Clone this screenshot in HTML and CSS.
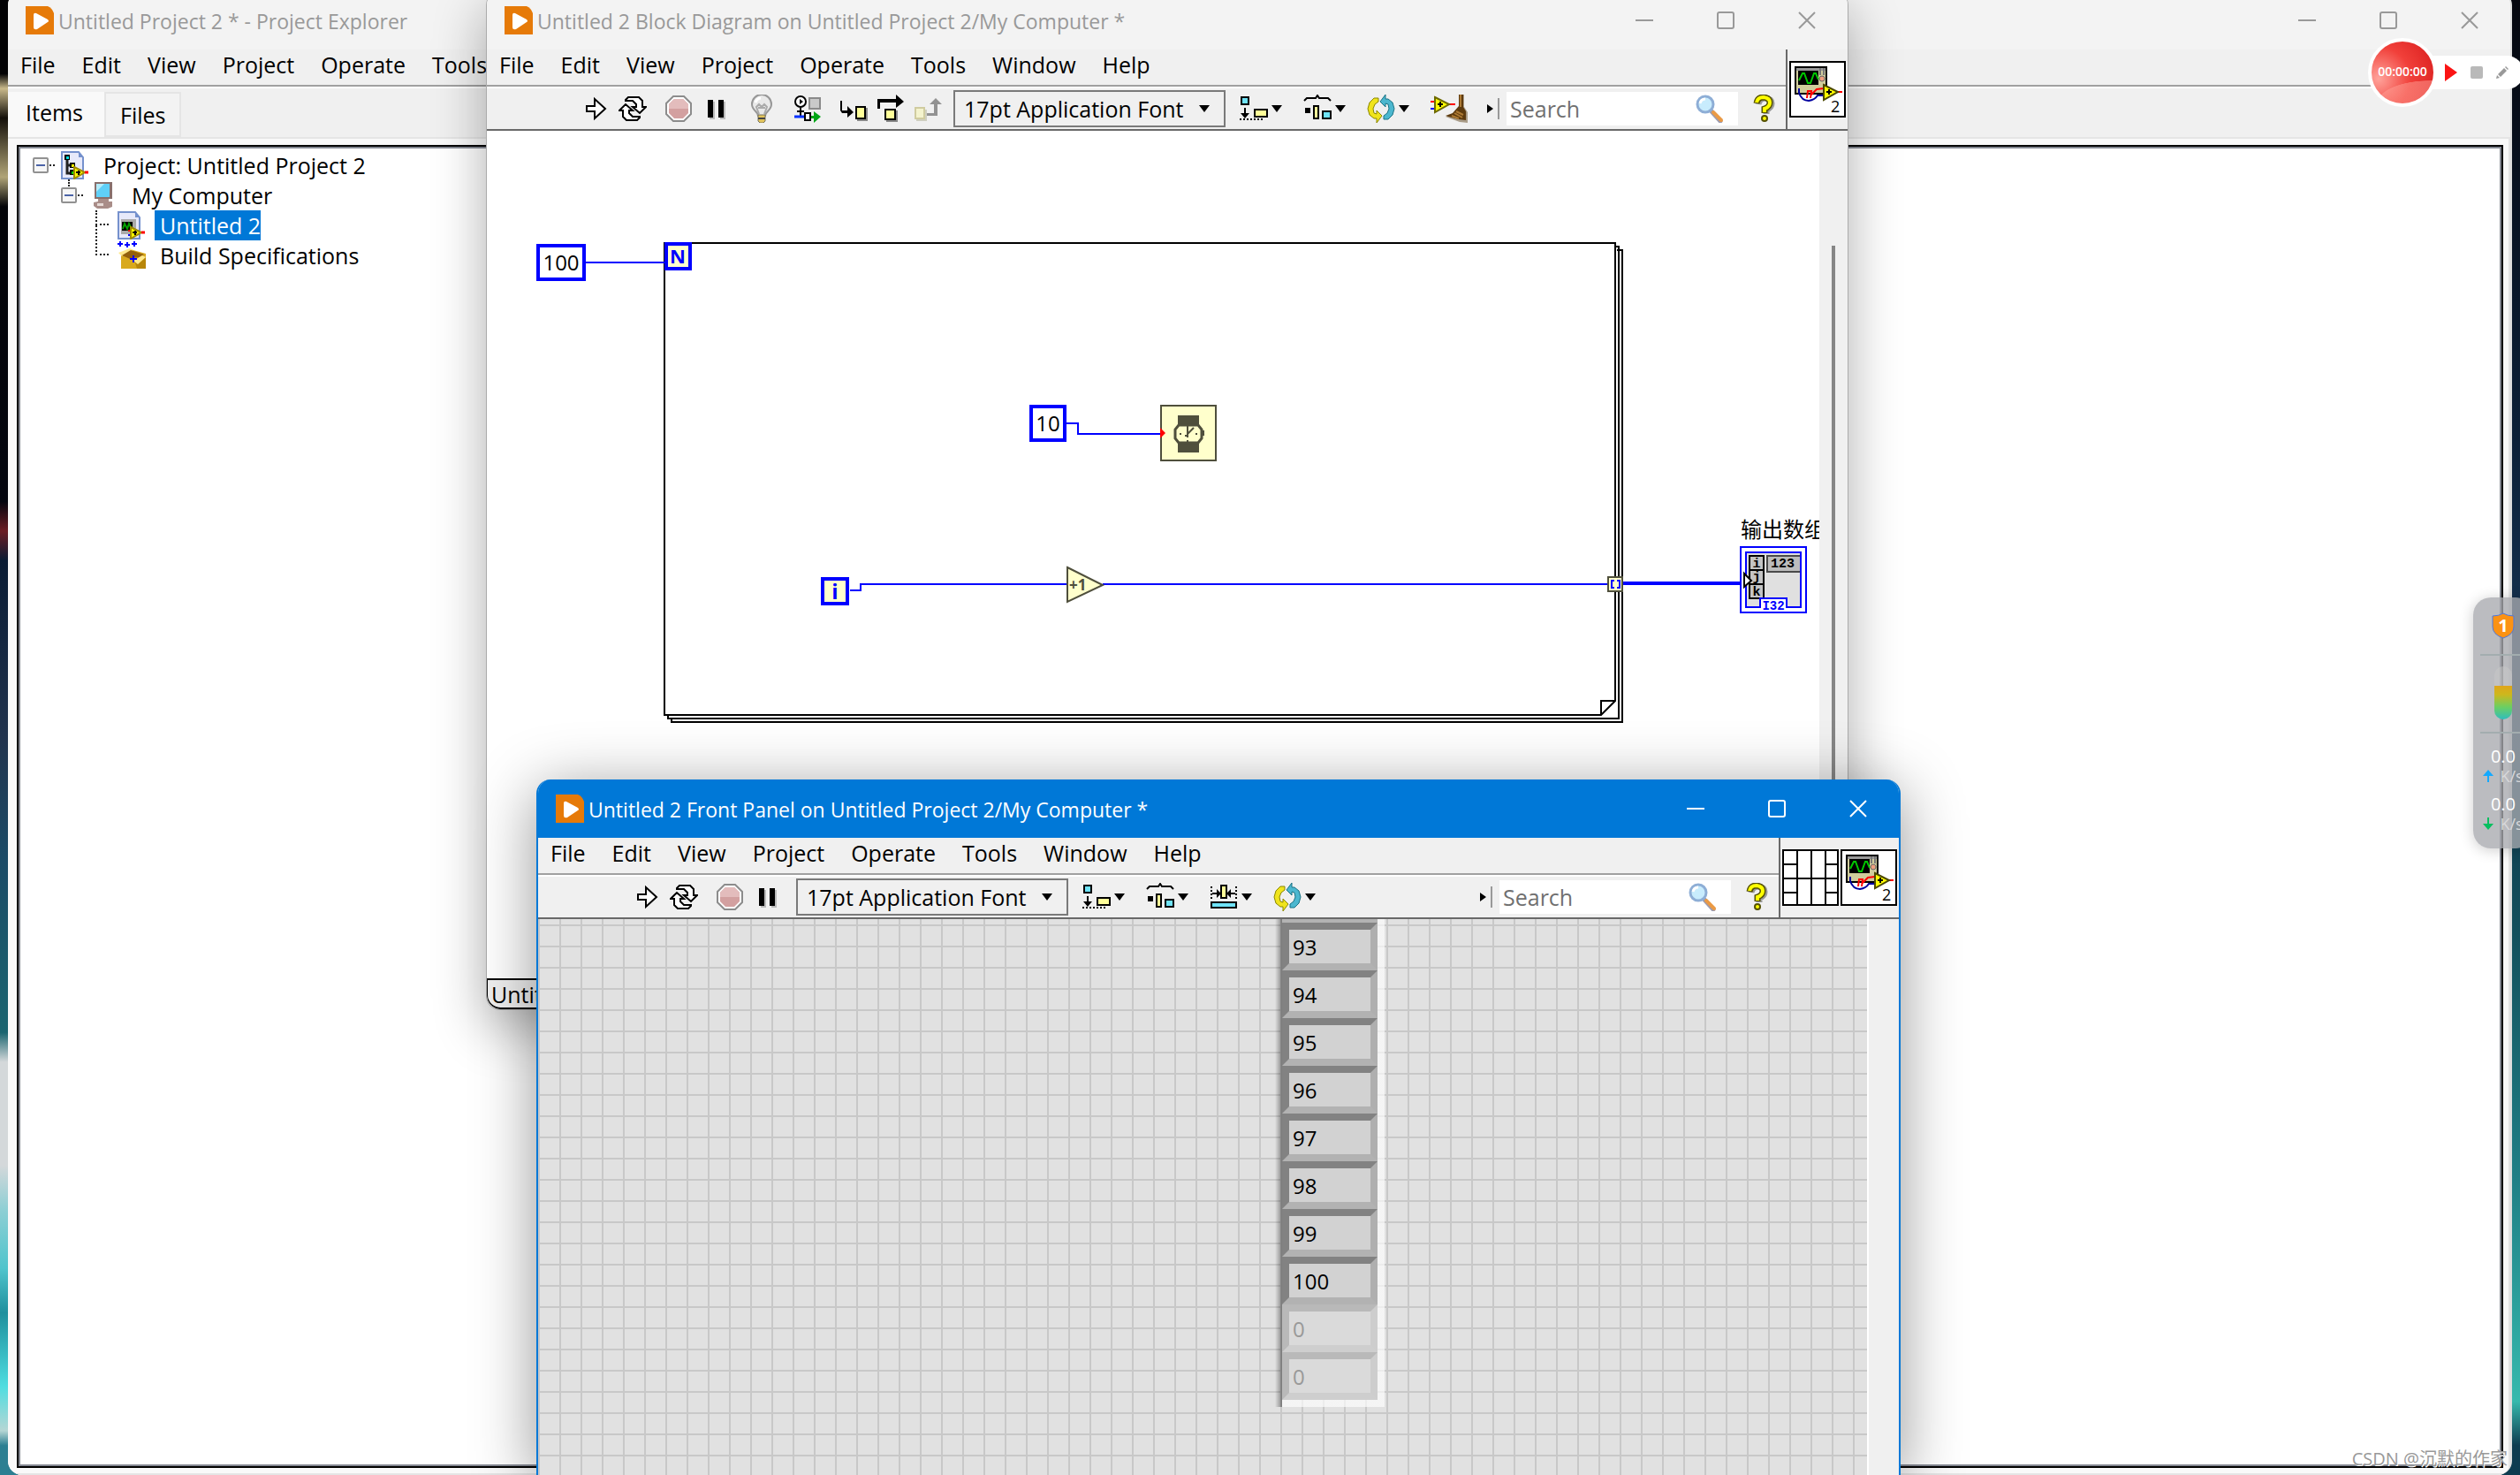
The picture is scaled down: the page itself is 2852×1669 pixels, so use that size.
FILE: index.html
```html
<!DOCTYPE html>
<html lang="en">
<head>
<meta charset="utf-8">
<title>Untitled 2 Front Panel on Untitled Project 2/My Computer *</title>
<link rel="stylesheet" href="styles.css">
</head>
<body>
<svg class="sprite" aria-hidden="true">
  <symbol id="app" viewBox="0 0 32 32"><path fill="#e67a08" d="M0 0h25q5 2 7 8v24H0z"/><path fill="#fff" d="M9 10q0-3 3-2l13 7q2 2 0 3l-12 8q-4 1-4-2z"/></symbol>
  <symbol id="min" viewBox="0 0 20 20"><path d="M0 10h20" stroke="currentColor" stroke-width="2"/></symbol>
  <symbol id="max" viewBox="0 0 20 20"><rect x="1" y="1" width="18" height="18" rx="2" fill="none" stroke="currentColor" stroke-width="2"/></symbol>
  <symbol id="close" viewBox="0 0 20 20"><path d="M1 1l18 18M19 1L1 19" stroke="currentColor" stroke-width="2"/></symbol>
  <symbol id="run" viewBox="0 0 32 32"><path d="M6 13h9V5l12 11-12 11v-8H6z" fill="#fff" stroke="#000" stroke-width="2"/></symbol>
  <symbol id="loop" viewBox="0 0 32 32"><g fill="#fff" stroke="#000" stroke-width="2"><path d="M8 6l3-3h12l4 4v7h4l-7 7-8-7h4v-3l-4-4H8z"/><path d="M24 26l-3 3H9l-4-4v-7H1l7-7 8 7h-4v3l4 4h8z"/></g></symbol>
  <symbol id="stop" viewBox="0 0 32 32"><path d="M10 2h12l8 8v12l-8 8H10l-8-8V10z" fill="#fff" stroke="#8c8c8c" stroke-width="2"/><path d="M11 5h10l6 6v10l-6 6H11l-6-6V11z" fill="#d3a0a0"/><path d="M11 5h10l6 6v5H5v-5z" fill="#e3bcbc"/></symbol>
  <symbol id="pause" viewBox="0 0 32 32"><path d="M9 8h6v20H9zM21 8h6v20h-6z" fill="#bbb"/><path d="M7 6h6v20H7zM19 6h6v20h-6z"/></symbol>
  <symbol id="bulb" viewBox="0 0 32 32"><path d="M12 24c0-5-7-6-7-13a11 11 0 0122 0c0 7-7 8-7 13z" fill="#e9e9e9" stroke="#979797" stroke-width="2"/><path d="M13 22l-3-8 3-3 3 3 3-3 3 3-3 8M12 15h8" fill="none" stroke="#aaa" stroke-width="2"/><path d="M9 9q2-5 6-5" stroke="#fff" stroke-width="3" fill="none"/><path d="M12 23h8v7l-2 2h-4l-2-2z" fill="#e2c45b" stroke="#77735f"/><path d="M12 27h8" stroke="#444" stroke-width="2"/></symbol>
  <symbol id="retain" viewBox="0 0 32 32"><circle cx="8" cy="8" r="6" fill="#fff" stroke="#000" stroke-width="2"/><path d="M7 5l4 3-4 3zM7 14h2v11H7zM4 18h8v2H4z"/><rect x="18" y="4" width="12" height="12" fill="#c9c9c9" stroke="#8a8a8a" stroke-width="2"/><path d="M1 25h13" stroke="#0030ff" stroke-width="3"/><rect x="13" y="21" width="6" height="8" fill="#fff" stroke="#000" stroke-width="2"/><path d="M20 24h3v-5l8 6-8 7v-5h-3z" fill="#00a515"/></symbol>
  <symbol id="into" viewBox="0 0 32 32"><path d="M1 7h2v11h6v-5l7 7-7 6v-5H3l-2-3z"/><path d="M20 15h12v15H20z" fill="#888"/><rect x="19" y="14" width="10" height="13" fill="#ffff99" stroke="#000" stroke-width="2"/></symbol>
  <symbol id="over" viewBox="0 0 32 32"><path d="M1 5h21V0l9 8-9 7V9H4v7H1z"/><rect x="10" y="17" width="11" height="11" fill="#ffff99" stroke="#000" stroke-width="2"/><path d="M23 18v12H11" stroke="#888" stroke-width="2" fill="none"/></symbol>
  <symbol id="out" viewBox="0 0 32 32"><rect x="2" y="15" width="10" height="12" fill="#f4f3cd" stroke="#d0cca0" stroke-width="2"/><path d="M14 17v12H3" stroke="#cfcfc0" stroke-width="2" fill="none"/><path d="M15 21h8V11h-5l7-7 7 7h-5v13H15z" fill="#929292"/></symbol>
  <symbol id="align" viewBox="0 0 32 32"><rect x="2" y="3" width="8" height="8" fill="#6fe3f7" stroke="#000" stroke-width="2"/><path d="M5 15h2v6h4l-5 6-5-6h4z"/><rect x="17" y="17" width="14" height="8" fill="#ffff99" stroke="#000" stroke-width="2"/><path d="M0 28h28" stroke="#000" stroke-width="2" stroke-dasharray="2 2"/></symbol>
  <symbol id="dist" viewBox="0 0 32 32"><path d="M1 7l3-3h10l2-3 2 3h10l3 3" fill="none" stroke="#000" stroke-width="2"/><path d="M2 15h6v6H2z"/><rect x="12" y="13" width="5" height="14" fill="#ffff99" stroke="#000" stroke-width="2"/><rect x="22" y="19" width="9" height="8" fill="#6fe3f7" stroke="#000" stroke-width="2"/></symbol>
  <symbol id="resize" viewBox="0 0 32 32"><path d="M2 4v14M30 4v14" stroke="#000" stroke-width="2" stroke-dasharray="2 2"/><path d="M3 12h8M29 12h-8" stroke="#000" stroke-width="2"/><path d="M8 7l5 5-5 5zM24 7l-5 5 5 5z"/><rect x="13" y="3" width="6" height="14" fill="#ffff99" stroke="#000" stroke-width="2"/><rect x="2" y="22" width="28" height="6" fill="#6fe3f7" stroke="#000" stroke-width="2"/></symbol>
  <symbol id="sync" viewBox="0 0 32 32"><path d="M13 4H8L3 9 1 16l2 7 5 4h3v5l6-8-6-6v4l-3-1-1-5 2-5 4-3z" fill="#f0e41c" stroke="#8a8700" stroke-width="1"/><path d="M19 28h5l5-5 2-7-2-7-5-4h-3V0l-6 8 6 6v-4l3 1 1 5-2 5-4 3z" fill="#4cb7cf" stroke="#1a7385" stroke-width="1"/></symbol>
  <symbol id="clean" viewBox="0 0 42 32"><path d="M0 8h5M20 11h8" stroke="#f00" stroke-width="2"/><path d="M0 16h5" stroke="#00f" stroke-width="2"/><path d="M5 3l16 8L5 20z" fill="#ff0" stroke="#6e6a00" stroke-width="2"/><path d="M8 11h6M11 8v6" stroke="#000" stroke-width="2"/><path d="M34 0h4v14l4 6v12l-9-1-16-6 8-3 7-8z" fill="#a99c88"/><path d="M32 0h5v14l3 5v10l-8-1-15-4 8-3 7-8z" fill="#5d3a0e"/><path d="M34 0v14M24 24l8 3M29 19l8 4M27 21l9 5" stroke="#ad7a34" stroke-width="2"/></symbol>
  <symbol id="mag" viewBox="0 0 32 32"><path d="M18 19l10 11" stroke="#9b9bb0" stroke-width="5" stroke-linecap="round"/><path d="M20 20l9 9" stroke="#ea9a45" stroke-width="4" stroke-linecap="round"/><circle cx="11" cy="11" r="9" fill="#c8ecfd" stroke="#8eaed6" stroke-width="3"/><path d="M5 10q1-5 6-5" stroke="#fff" stroke-width="3" fill="none"/></symbol>
  <symbol id="help" viewBox="0 0 32 32"><path d="M10 11q1-7 8-7 7 1 7 6t-6 7v5" fill="none" stroke="#9a9a9a" stroke-width="7"/><path d="M8 10q1-7 8-7 7 1 7 6t-6 7v5" fill="none" stroke="#555100" stroke-width="7"/><path d="M8 9q1-6 8-6 7 1 7 6t-6 7v4" fill="none" stroke="#ff0" stroke-width="4"/><circle cx="17" cy="27" r="3" fill="#ff0" stroke="#555100" stroke-width="2"/></symbol>
  <symbol id="down" viewBox="0 0 12 10"><path d="M0 1h12L6 9z"/></symbol>
  <symbol id="grip" viewBox="0 0 14 32"><path d="M0 11l7 5-7 5z"/><path d="M13 4v24" stroke="#999" stroke-width="2"/></symbol>
  <symbol id="vi" viewBox="0 0 64 64"><rect x="1" y="1" width="62" height="62" fill="#fff" stroke="#000" stroke-width="2"/><rect x="7" y="7" width="35" height="30" fill="#d0cc9c" stroke="#000" stroke-width="2"/><path d="M8 8h33v3H8z" fill="#999"/><path d="M10 11h23v16H10z"/><path d="M11 22l4-8h2l4 11h3l4-11h2l3 7" fill="none" stroke="#00c800" stroke-width="2"/><path d="M35 8v8M39 8v8" stroke="#777" stroke-width="2"/><circle cx="37" cy="20" r="3" fill="#f0a080" stroke="#666"/><path d="M11 31v5q3 9 11 9 7-1 10-6h7" fill="none" stroke="#0000a0" stroke-width="2"/><path d="M20 42l1-8h4l-1 8M25 38l6-6 8-1M52 35h8" fill="none" stroke="#f00" stroke-width="2"/><path d="M39 27l16 8-16 9z" fill="#ff0" stroke="#4b4800" stroke-width="2"/><path d="M42 35h6M45 32v6" stroke="#000" stroke-width="2"/><text x="47" y="58" font-size="18" class="svg-label">2</text></symbol>
  <symbol id="conn" viewBox="0 0 64 64"><g fill="#fff" stroke="#000" stroke-width="2"><path d="M1 1h62v62H1z"/><path d="M17 1v62M33 1v62M49 1v62M1 33h62M1 17h16M1 49h16M49 17h14M49 49h14"/></g></symbol>
  <symbol id="page" viewBox="0 0 32 32"><path d="M1 1h19l5 6v24H1z" fill="#e7e9fa" stroke="#7591cd" stroke-width="2"/><path d="M20 1v6h5z" fill="#7591cd"/></symbol>
  <symbol id="arrowtag" viewBox="0 0 32 32"><path d="M15 18l12 6-12 7z" fill="#ff0" stroke="#a18c00" stroke-width="2"/><path d="M17 24h5M20 22v5" stroke="#000" stroke-width="2"/><path d="M27 24h4" stroke="#f00" stroke-width="3"/></symbol>
  <symbol id="proj" viewBox="0 0 32 32"><use href="#page"/><path d="M7 9v16h5M8 16h5" fill="none" stroke="#222" stroke-width="3"/><path d="M4 4h6v6H4zM10 13h6v6h-6zM10 21h6v6h-6z"/><path d="M6 6h3v3H6z" fill="#0dd"/><path d="M12 15h3v3h-3z" fill="#ff0"/><path d="M12 23h3v3h-3z" fill="#0c0"/><use href="#arrowtag"/></symbol>
  <symbol id="vifile" viewBox="0 0 32 32"><use href="#page"/><path d="M4 9h17v17H4z" fill="#aaa"/><path d="M5 12h12v10H5z"/><path d="M6 20l2-6 3 6 2-6 3 6" fill="none" stroke="#00a000" stroke-width="2"/><path d="M12 22h4" stroke="#f00" stroke-width="2"/><path d="M12 27h4" stroke="#00f" stroke-width="2"/><use href="#arrowtag"/></symbol>
  <symbol id="pc" viewBox="0 0 32 32"><path d="M6 1h20v19H6z" fill="#88706d"/><path d="M8 3h15v15H8z" fill="#5fd0f8"/><path d="M8 3h9L8 12z" fill="#b4ecfb"/><path d="M10 20h12v3h4v6l-5 2H9l-4-3v-4l5-1z" fill="#a98d88"/><path d="M9 25h7v3H9z" fill="#e6dad6"/></symbol>
  <symbol id="build" viewBox="0 0 32 32"><path d="M4 13l10-4 18 5v17H4z" fill="#d9a91c"/><path d="M1 13l13-5 4 2L5 17z" fill="#ffe98c"/><path d="M5 16l10-6 15 5-11 7z" fill="#94610b"/><path d="M18 18h14v13H22z" fill="#b88608"/><path d="M18 22l10-6 4 2-9 8z" fill="#ffe98c"/><path d="M0 3h6M3 0v6M8 4h6M11 1v6M16 3h6M19 0v6M14 20h8M18 16v8" stroke="#00f" stroke-width="2"/></symbol>
</svg>

<main class="desktop">
  <section class="window explorer" aria-label="Project Explorer">
    <header class="titlebar">
      <svg class="ico"><use href="#app"/></svg><h1>Untitled Project 2 * - Project Explorer</h1>
      <button aria-label="Minimize"><svg><use href="#min"/></svg></button><button aria-label="Maximize"><svg><use href="#max"/></svg></button><button aria-label="Close"><svg><use href="#close"/></svg></button>
    </header>
    <nav class="menu"><button>File</button><button>Edit</button><button>View</button><button>Project</button><button>Operate</button><button>Tools</button></nav>
    <div class="tabs"><button class="tab active">Items</button><button class="tab">Files</button></div>
    <div class="tab-page">
      <ul class="tree">
        <li class="node level-0"><button class="twist" aria-label="Collapse"></button><svg class="ico"><use href="#proj"/></svg><span>Project: Untitled Project 2</span></li>
        <li class="node level-1"><button class="twist" aria-label="Collapse"></button><svg class="ico"><use href="#pc"/></svg><span>My Computer</span></li>
        <li class="node level-2"><i class="branch"></i><svg class="ico"><use href="#vifile"/></svg><span class="selected">Untitled 2</span></li>
        <li class="node level-2"><i class="branch last"></i><svg class="ico"><use href="#build"/></svg><span>Build Specifications</span></li>
      </ul>
    </div>
  </section>

  <section class="window diagram" aria-label="Block Diagram">
    <header class="titlebar">
      <svg class="ico"><use href="#app"/></svg><h2>Untitled 2 Block Diagram on Untitled Project 2/My Computer *</h2>
      <button aria-label="Minimize"><svg><use href="#min"/></svg></button><button aria-label="Maximize"><svg><use href="#max"/></svg></button><button aria-label="Close"><svg><use href="#close"/></svg></button>
    </header>
    <div class="chrome">
      <div class="bars">
        <nav class="menu"><button>File</button><button>Edit</button><button>View</button><button>Project</button><button>Operate</button><button>Tools</button><button>Window</button><button>Help</button></nav>
        <div class="toolbar">
          <div class="group"><button class="tool" aria-label="Run"><svg class="ico"><use href="#run"/></svg></button><button class="tool" aria-label="Run Continuously"><svg class="ico"><use href="#loop"/></svg></button></div>
          <div class="group"><button class="tool" aria-label="Abort"><svg class="ico"><use href="#stop"/></svg></button><button class="tool" aria-label="Pause"><svg class="ico"><use href="#pause"/></svg></button></div>
          <button class="tool" aria-label="Highlight Execution"><svg class="ico"><use href="#bulb"/></svg></button>
          <button class="tool" aria-label="Retain Wire Values"><svg class="ico"><use href="#retain"/></svg></button>
          <div class="group"><button class="tool" aria-label="Step Into"><svg class="ico"><use href="#into"/></svg></button><button class="tool" aria-label="Step Over"><svg class="ico"><use href="#over"/></svg></button><button class="tool" aria-label="Step Out"><svg class="ico"><use href="#out"/></svg></button></div>
          <div class="font-pick"><select aria-label="Text Settings"><option>17pt Application Font</option></select><svg class="arrow"><use href="#down"/></svg></div>
          <div class="drops">
            <button class="drop" aria-label="Align Objects"><svg class="ico"><use href="#align"/></svg><svg class="arrow"><use href="#down"/></svg></button>
            <button class="drop" aria-label="Distribute Objects"><svg class="ico"><use href="#dist"/></svg><svg class="arrow"><use href="#down"/></svg></button>
            <button class="drop" aria-label="Reorder"><svg class="ico"><use href="#sync"/></svg><svg class="arrow"><use href="#down"/></svg></button>
            <button class="tool wide" aria-label="Clean Up Diagram"><svg><use href="#clean"/></svg></button>
          </div>
          <svg class="grip"><use href="#grip"/></svg>
          <div class="search"><input type="search" placeholder="Search" aria-label="Search diagram"><svg class="ico"><use href="#mag"/></svg></div>
          <button class="tool" aria-label="Context Help"><svg class="ico"><use href="#help"/></svg></button>
        </div>
      </div>
      <div class="panes"><svg><use href="#vi"/></svg></div>
    </div>
    <div class="workspace">
      <div class="canvas">
        <svg width="1508" height="960" viewBox="551 148 1508 960" role="img" aria-label="For loop diagram">
          <g fill="none" stroke="#000" stroke-width="2">
            <path d="M760 813v4h1076V283h-6M756 809v4h1076V279h-4"/>
            <path d="M752 275h1076v518l-16 16H752z" fill="#fff"/>
            <path d="M1812 809v-16h16"/>
          </g>
          <g fill="none" stroke="#00f" stroke-width="2">
            <path d="M663 297h90M1207 479h13v12h94M962 668h12v-7h235M1248 661h572"/>
            <path d="M1837 660h134" stroke-width="4"/>
          </g>
          <g stroke="#00f" stroke-width="4" fill="#fff">
            <path d="M609 278h52v38h-52zM1167 460h38v38h-38z"/>
            <path d="M754 276h27v28h-27zM931 655h28v28h-28z" fill="#ffc"/>
          </g>
          <g class="svg-label"><text x="635" y="306" font-size="24" text-anchor="middle">100</text><text x="1186" y="488" font-size="24" text-anchor="middle">10</text></g>
          <g class="svg-bold" fill="#00f"><text x="767" y="298" font-size="22" text-anchor="middle">N</text><text x="945" y="678" font-size="24" text-anchor="middle">i</text></g>
          <path d="M1314 459h62v62h-62z" fill="#ffc" stroke="#4f4f3c" stroke-width="2"/>
          <path d="M1313 484l6 6-6 6z" fill="#f00"/>
          <path d="M1333 470h24v10h-24zM1333 502h24v10h-24zM1361 487h2v6h-2z" fill="#4f4f3c"/>
          <path d="M1334 481h22l4 5v10l-4 5h-22l-4-5v-10z" fill="#ffc" stroke="#4f4f3c" stroke-width="3"/>
          <path d="M1344 482v13M1344 491l7-7M1335 491h2M1353 491h2M1343 499h2M1341 493h3" stroke="#4f4f3c" stroke-width="2"/>
          <path d="M1208 642l40 20-40 19z" fill="#ffc" stroke="#4f4f3c" stroke-width="2"/>
          <text x="1210" y="668" font-size="17" class="svg-bold" fill="#4f4f3c">+1</text>
          <path d="M1820 653h16v16h-16z" fill="#ffc" stroke="#4f4f3c" stroke-width="2"/>
          <path d="M1827 657h-3v8h3M1830 657h3v8h-3" fill="none" stroke="#00f" stroke-width="2"/>
          <text x="1970" y="608" font-size="24" class="svg-label">输出数组</text>
          <path d="M1970 619h74v74h-74z" fill="#fff" stroke="#00f" stroke-width="2"/>
          <path d="M1976 625h62v62h-62z" fill="#e0e0e0" stroke="#00f" stroke-width="2"/>
          <path d="M1980 629h16v48h-16zM1980 645h16M1980 661h16" fill="#c4c4c4" stroke="#000" stroke-width="2"/>
          <path d="M2037 629h-37v18h37" fill="#bcbcbc" stroke="#4a4a4a" stroke-width="2"/>
          <g class="svg-mono"><text x="1988" y="642" text-anchor="middle" font-size="15">i</text><text x="1988" y="657" text-anchor="middle" font-size="15">j</text><text x="1988" y="674" text-anchor="middle" font-size="15">k</text><text x="2004" y="642" font-size="15">123</text></g>
          <path d="M1992 688v-11h30v11" fill="#fff" stroke="#00f" stroke-width="2"/>
          <text x="2007" y="690" text-anchor="middle" font-size="14" class="svg-mono" fill="#00f">I32</text>
          <path d="M1974 649v15l8-7z" fill="#fff" stroke="#000" stroke-width="2"/>
        </svg>
      </div>
      <div class="vscroll"><i class="thumb"></i></div>
    </div>
    <footer class="status">Untitled Project 2/My Computer</footer>
  </section>

  <section class="window panel" aria-label="Front Panel">
    <header class="titlebar">
      <svg class="ico"><use href="#app"/></svg><h2>Untitled 2 Front Panel on Untitled Project 2/My Computer *</h2>
      <button aria-label="Minimize"><svg><use href="#min"/></svg></button><button aria-label="Maximize"><svg><use href="#max"/></svg></button><button aria-label="Close"><svg><use href="#close"/></svg></button>
    </header>
    <div class="chrome">
      <div class="bars">
        <nav class="menu"><button>File</button><button>Edit</button><button>View</button><button>Project</button><button>Operate</button><button>Tools</button><button>Window</button><button>Help</button></nav>
        <div class="toolbar">
          <div class="group"><button class="tool" aria-label="Run"><svg class="ico"><use href="#run"/></svg></button><button class="tool" aria-label="Run Continuously"><svg class="ico"><use href="#loop"/></svg></button></div>
          <div class="group"><button class="tool" aria-label="Abort"><svg class="ico"><use href="#stop"/></svg></button><button class="tool" aria-label="Pause"><svg class="ico"><use href="#pause"/></svg></button></div>
          <div class="font-pick"><select aria-label="Text Settings"><option>17pt Application Font</option></select><svg class="arrow"><use href="#down"/></svg></div>
          <div class="drops">
            <button class="drop" aria-label="Align Objects"><svg class="ico"><use href="#align"/></svg><svg class="arrow"><use href="#down"/></svg></button>
            <button class="drop" aria-label="Distribute Objects"><svg class="ico"><use href="#dist"/></svg><svg class="arrow"><use href="#down"/></svg></button>
            <button class="drop" aria-label="Resize Objects"><svg class="ico"><use href="#resize"/></svg><svg class="arrow"><use href="#down"/></svg></button>
            <button class="drop" aria-label="Reorder"><svg class="ico"><use href="#sync"/></svg><svg class="arrow"><use href="#down"/></svg></button>
          </div>
          <svg class="grip"><use href="#grip"/></svg>
          <div class="search"><input type="search" placeholder="Search" aria-label="Search panel"><svg class="ico"><use href="#mag"/></svg></div>
          <button class="tool" aria-label="Context Help"><svg class="ico"><use href="#help"/></svg></button>
        </div>
      </div>
      <div class="panes"><svg><use href="#conn"/></svg><svg><use href="#vi"/></svg></div>
    </div>
    <div class="workspace">
      <div class="canvas grid">
        <div class="array">
          <input readonly value="93" aria-label="Element 92"><input readonly value="94" aria-label="Element 93"><input readonly value="95" aria-label="Element 94"><input readonly value="96" aria-label="Element 95"><input readonly value="97" aria-label="Element 96"><input readonly value="98" aria-label="Element 97"><input readonly value="99" aria-label="Element 98"><input readonly value="100" aria-label="Element 99"><input readonly disabled value="0" aria-label="Element 100"><input readonly disabled value="0" aria-label="Element 101">
        </div>
      </div>
      <div class="vscroll"></div>
    </div>
  </section>

  <aside class="recorder" aria-label="Screen recorder">
    <div class="dial">00:00:00</div>
    <button aria-label="Record"><svg width="14" height="20" viewBox="0 0 14 20"><path d="M0 0l14 10L0 20z" fill="#fb1414"/></svg></button>
    <button aria-label="Stop"><svg width="14" height="14" viewBox="0 0 14 14"><rect width="14" height="14" rx="2" fill="#b9b9b9"/></svg></button>
    <button aria-label="Draw"><svg width="14" height="14" viewBox="0 0 14 14"><path d="M0 14l1-4 3 3zM2 9l7-7 3 3-7 7zM10 1l1-1 3 3-1 1z" fill="#999"/></svg></button>
  </aside>

  <aside class="netmeter" aria-label="Network speed">
    <svg class="shield" viewBox="0 0 26 30"><path d="M13 1q5 3 12 3v12q0 9-12 13Q1 25 1 16V4q7 0 12-3z" fill="#fb9214" stroke="#4c78e0"/><text x="13" y="22" text-anchor="middle" font-size="20" class="svg-bold" fill="#fff">1</text></svg>
    <hr>
    <div class="gauge"></div>
    <hr>
    <div class="rate"><b>0.0</b><span><svg viewBox="0 0 12 14"><path d="M6 0l6 7H7v7H5V7H0z" fill="#14a9ff"/></svg>K/s</span></div>
    <div class="rate"><b>0.0</b><span><svg viewBox="0 0 12 14"><path d="M6 14l6-7H7V0H5v7H0z" fill="#05bf5f"/></svg>K/s</span></div>
  </aside>

  <p class="credit">CSDN @沉默的作家</p>
</main>
</body>
</html>
```
FILE: styles.css
```css
* { box-sizing: border-box; }

html, body { height: 100%; margin: 0; }

body {
  overflow: hidden;
  font: 25px/34px "Open Sans", "Noto Sans CJK SC", sans-serif;
  color: #000;
}

button, input, select { font: inherit; color: inherit; margin: 0; }
button { border: 0; padding: 0; background: none; }
svg { display: block; flex: none; }
h1, h2, p { margin: 0; font-weight: 400; }

.sprite { position: absolute; width: 0; height: 0; }
.ico { width: 32px; height: 32px; }
.arrow { width: 12px; height: 10px; }
.svg-label { font-family: "Open Sans", "Noto Sans CJK SC", sans-serif; }
.svg-bold { font-family: "Open Sans", sans-serif; font-weight: 700; }
.svg-mono { font-family: "Liberation Mono", monospace; font-weight: 700; }

.desktop {
  position: relative;
  height: 100vh;
  overflow: hidden;
  background:
    linear-gradient(#05070f 0%, #0c2038 30%, #14304e 42%, #103f52 55%, #134f5c 63%, #1f7f86 80%, #35b9ad 95%, #0e3c50 98%, #0e3c50 100%) right / 50% 100% no-repeat,
    linear-gradient(#020204 0 5%, #c9b98a 6%, #14100a 8%, #b0a477 12%, #030408 14%, #04060f 34%, #6b1d24 36%, #0a1c34 38%, #22344e 50%, #1b4a66 58%, #1b6570 70%, #d4d8da 72% 79%, #8ecfd4 82%, #4fc4cc 86%, #1e8f9d 89%, #4fdde0 94%, #b5d6d4 97%, #2c7f92 98%) left / 50% 100% no-repeat;
}

/* Windows */
.window {
  position: absolute;
  display: flex;
  flex-direction: column;
  overflow: hidden;
  border-radius: 16px;
  background: #f0f0f0;
}
.explorer { top: -10px; right: 9px; bottom: 0; left: 9px; border-right: 2px solid #ddd; }
.diagram {
  top: -10px; right: 760px; left: 550px; height: 1153px;
  border: 1px solid #ababab;
  border-top: 0;
  box-shadow: 0 20px 60px rgba(0, 0, 0, .32);
}
.panel {
  top: 882px; right: 701px; bottom: 0; left: 607px;
  border: 2px solid #0078d7;
  border-width: 0 2px;
  border-radius: 16px 16px 0 0;
  box-shadow: 0 12px 70px rgba(0, 0, 0, .42);
}

.titlebar {
  display: flex;
  align-items: center;
  flex: none;
  height: 66px;
  padding-left: 20px;
  background: #f3f3f3;
  color: #999;
}
.titlebar h1, .titlebar h2 {
  flex: 1;
  padding: 2px 0 0 5px;
  font-size: 23px;
  line-height: 32px;
  white-space: nowrap;
}
.titlebar button { display: grid; place-items: center; width: 92px; height: 66px; }
.titlebar button svg { width: 20px; height: 20px; }
.panel .titlebar { background: #0078d7; color: #fff; }

.menu {
  display: flex;
  flex: none;
  gap: 30px;
  height: 42px;
  padding-left: 14px;
  border-bottom: 2px solid #a0a0a0;
}
.menu button { height: 34px; line-height: 34px; }

.chrome { display: flex; flex: none; border-bottom: 2px solid #696969; }
.bars { flex: 1; min-width: 0; }
.toolbar {
  display: flex;
  align-items: center;
  gap: 20px;
  height: 48px;
  padding: 0 9px 0 107px;
  border-top: 2px solid #fff;
}
.group { display: flex; gap: 10px; }
.tool { display: block; }
.tool.wide svg { width: 42px; height: 32px; }

.font-pick { position: relative; width: 308px; margin: 0 -4px 0 -7px; }
.panel .font-pick { margin-left: -3px; }
.font-pick select {
  display: block;
  appearance: none;
  width: 100%;
  height: 42px;
  padding: 0 10px;
  border: 2px solid #7a7a7a;
  border-radius: 0;
  background: #f0f0f0;
}
.font-pick .arrow { position: absolute; top: 16px; right: 18px; pointer-events: none; }

.drops { display: flex; gap: 24px; margin-right: auto; }
.drop { display: flex; align-items: center; gap: 4px; width: 48px; }
.grip { width: 14px; height: 32px; margin-right: -12px; }

.search { display: flex; align-items: center; width: 262px; height: 38px; margin-right: -7px; padding-right: 16px; background: #fff; }
.search input { flex: 1; min-width: 0; height: 38px; padding: 0 4px; border: 0; background: none; }
.search input::placeholder { color: #707070; opacity: 1; }

.panes { display: flex; align-items: center; gap: 2px; padding: 0 2px; border-left: 2px solid #696969; }
.panes svg { width: 64px; height: 64px; }

.workspace { display: flex; flex: 1; min-height: 0; }
.canvas { flex: 1; min-width: 0; overflow: hidden; background: #fff; }
.vscroll { flex: none; width: 32px; background: #f0f0f0; }
.thumb { display: block; width: 4px; height: 100%; margin: 130px auto 0 14px; background: #868686; }

.status {
  flex: none;
  height: 35px;
  padding-left: 4px;
  border: 2px solid #000;
  border-width: 2px 2px 2px 1px;
  border-radius: 0 0 16px 16px;
  line-height: 32px;
  white-space: nowrap;
}

/* Project explorer */
.tabs {
  display: flex;
  align-items: flex-start;
  flex: none;
  height: 57px;
  padding-top: 4px;
  border-top: 2px solid #fff;
}
.tab { height: 51px; padding: 0 16px; border: 2px solid #e5e5e5; background: #f3f3f3; }
.tab.active { padding: 0 24px 6px 20px; border: 0; background: #f9f9f9; }
.tab-page {
  display: flex;
  flex: 1;
  padding: 7px 6px 6px 10px;
  border: 2px solid #e5e5e5;
  border-left: 0;
  background: #f9f9f9;
}
.tree {
  flex: 1;
  margin: 0;
  padding: 4px 0 0 14px;
  border: 2px solid #000;
  outline: 2px solid #838791;
  outline-offset: -4px;
  background: #fff;
  list-style: none;
}
.node { display: flex; align-items: center; height: 34px; }
.level-1 { padding-left: 32px; }
.level-2 { padding-left: 70px; }
.twist {
  position: relative;
  flex: none;
  width: 18px;
  height: 18px;
  margin: 0 14px 0 2px;
  border: 2px solid #919191;
  border-radius: 2px;
  background: linear-gradient(#4b63a7, #4b63a7) center / 10px 2px no-repeat, #f6f6f6;
}
.twist::after { content: ""; position: absolute; top: 6px; left: 17px; width: 6px; border-top: 2px dotted #222; }
.level-1 .twist::before { content: ""; position: absolute; top: -11px; left: 6px; height: 8px; border-left: 2px dotted #222; }
.node span { padding: 0 2px 0 16px; white-space: nowrap; }
.level-2 span { margin-left: 10px; padding-left: 6px; }
.node .selected { padding-right: 0; background: #0078d7; color: #fff; }
.branch { flex: none; width: 15px; height: 17px; margin: 0 10px 17px 3px; border: 2px dotted #222; border-width: 0 0 2px 2px; }
.branch.last { height: 34px; margin-bottom: 34px; }

/* Front panel */
.grid {
  background:
    linear-gradient(#c8c8c8 2px, transparent 2px) 0 6px / 24px 24px,
    linear-gradient(90deg, #c8c8c8 2px, transparent 2px) 0 0 / 24px 24px,
    #e1e1e1;
  border-right: 2px solid #fff;
}
.panel .vscroll { width: 34px; }
.array {
  display: flex;
  flex-direction: column;
  width: 124px;
  margin-left: 834px;
  padding: 4px 8px 8px;
  background:
    linear-gradient(#b3b3b3, #b3b3b3) 8px 0 / 108px 4px no-repeat,
    linear-gradient(90deg, rgba(0, 0, 0, 0), rgba(0, 0, 0, .4)) left / 8px 100% no-repeat,
    linear-gradient(rgba(255, 255, 255, .65), rgba(255, 255, 255, .65)) right / 8px 100% no-repeat,
    linear-gradient(rgba(255, 255, 255, .65), rgba(255, 255, 255, .65)) 8px 100% / 108px 8px no-repeat;
}
.array input {
  width: 108px;
  height: 54px;
  padding: 0 4px;
  border: 8px solid;
  border-color: #828282 #afafaf #b2b2b2 #828282;
  border-radius: 0;
  background: #d2d2d2;
  font-size: 24px;
}
.array input:disabled { border-color: #b9b9b9 #cdcdcd #cecece #b9b9b9; background: #dadada; color: #999; }

/* Screen recorder overlay */
.recorder {
  position: absolute;
  top: 63px;
  right: -4px;
  display: flex;
  align-items: center;
  justify-content: flex-end;
  gap: 15px;
  width: 137px;
  height: 38px;
  padding-right: 17px;
  border-radius: 0 19px 19px 0;
  background: #fff;
}
.dial {
  position: absolute;
  top: -20px;
  left: -39px;
  width: 78px;
  height: 78px;
  border: 4px solid #fff;
  border-radius: 50%;
  background:
    radial-gradient(ellipse 60px 26px at 66px 70px, rgba(255, 160, 150, .5) 98%, transparent),
    radial-gradient(circle at 8px 42px, #ffa39b, #f1403a 36px, #db2020 70px);
  color: #fff;
  font: 600 14px/68px "Open Sans", sans-serif;
  text-align: center;
}

/* Network meter overlay */
.netmeter {
  position: absolute;
  top: 676px;
  right: -15px;
  display: flex;
  flex-direction: column;
  align-items: center;
  width: 68px;
  height: 284px;
  padding-top: 17px;
  border-radius: 20px;
  background: rgba(168, 169, 174, .78);
  box-shadow: 0 2px 16px rgba(0, 0, 0, .2);
  color: #fff;
}
.shield { width: 26px; height: 30px; }
.netmeter hr { width: 52px; height: 2px; margin: 17px 0 12px; border: 0; background: #a3adaf; }
.gauge {
  width: 20px;
  height: 60px;
  border-radius: 10px;
  background: linear-gradient(rgba(200, 200, 200, .5) 22px, #e0a51a 22px, #cdb81d 32px, #6bcf62 46px, #2fbdbd);
}
.netmeter .gauge + hr { margin: 14px 0 13px; }
.rate { height: 54px; line-height: 20px; text-align: center; }
.rate b { display: block; font-size: 20px; font-weight: 400; line-height: 26px; }
.rate span { display: flex; align-items: center; gap: 7px; color: #d8d8da; font-size: 18px; line-height: 18px; }
.rate svg { width: 12px; height: 14px; }

.credit {
  position: absolute;
  right: 14px;
  bottom: 4px;
  color: #999;
  font-size: 20px;
  line-height: 28px;
  text-shadow: 1px 1px 0 #fff;
}
```
